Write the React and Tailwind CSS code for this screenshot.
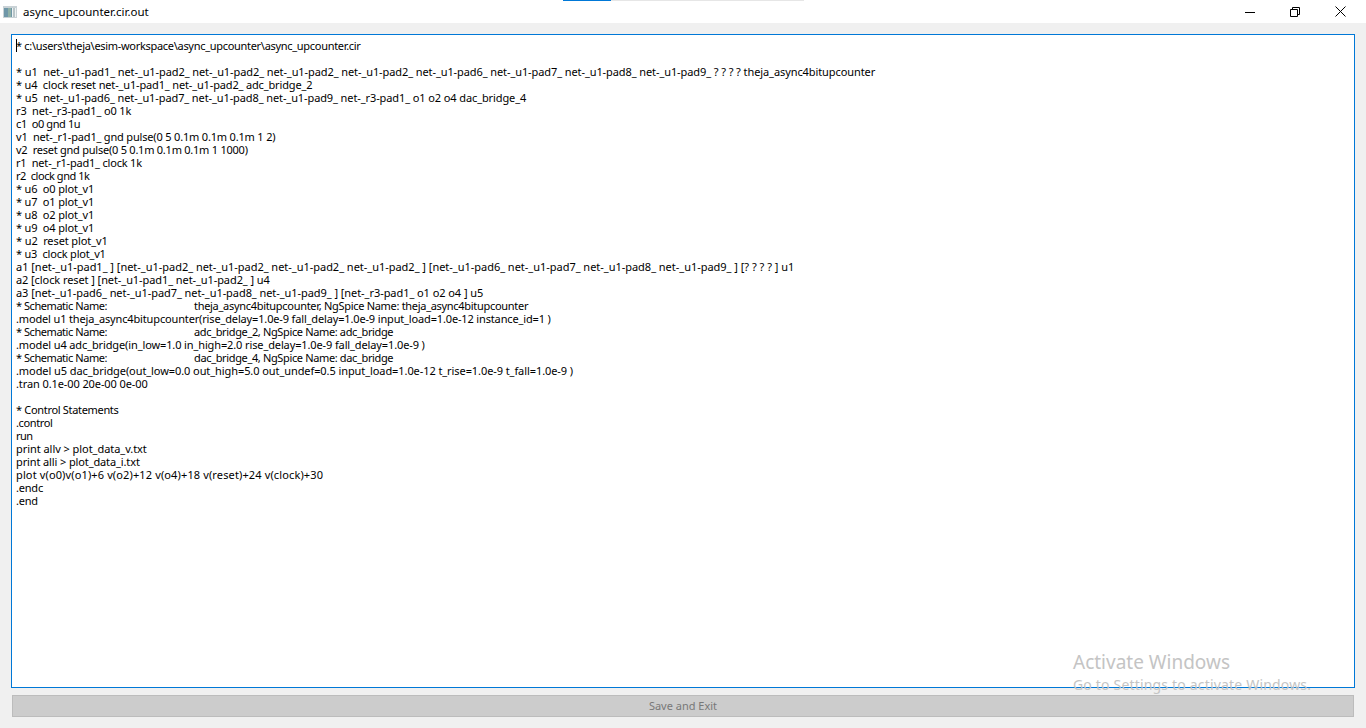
const lines = [
  ["* c:\\users\\theja\\esim-workspace\\async_upcounter\\async_upcounter.cir", "tracking-[-0.3px]"],
  ["", ""],
  ["* u1  net-_u1-pad1_ net-_u1-pad2_ net-_u1-pad2_ net-_u1-pad2_ net-_u1-pad2_ net-_u1-pad6_ net-_u1-pad7_ net-_u1-pad8_ net-_u1-pad9_ ? ? ? ? theja_async4bitupcounter", "tracking-[-0.09px]"],
  ["* u4  clock reset net-_u1-pad1_ net-_u1-pad2_ adc_bridge_2", "tracking-[-0.15px]"],
  ["* u5  net-_u1-pad6_ net-_u1-pad7_ net-_u1-pad8_ net-_u1-pad9_ net-_r3-pad1_ o1 o2 o4 dac_bridge_4", "tracking-[-0.1px]"],
  ["r3  net-_r3-pad1_ o0 1k", "tracking-[-0.12px]"],
  ["c1  o0 gnd 1u", "tracking-[-0.4px]"],
  ["v1  net-_r1-pad1_ gnd pulse(0 5 0.1m 0.1m 0.1m 1 2)", "tracking-[-0.18px]"],
  ["v2  reset gnd pulse(0 5 0.1m 0.1m 0.1m 1 1000)", "tracking-[-0.24px]"],
  ["r1  net-_r1-pad1_ clock 1k", "tracking-[-0.2px]"],
  ["r2  clock gnd 1k", "tracking-[-0.45px]"],
  ["* u6  o0 plot_v1", "tracking-[-0.15px]"],
  ["* u7  o1 plot_v1", "tracking-[-0.15px]"],
  ["* u8  o2 plot_v1", "tracking-[-0.15px]"],
  ["* u9  o4 plot_v1", "tracking-[-0.15px]"],
  ["* u2  reset plot_v1", "tracking-[-0.1px]"],
  ["* u3  clock plot_v1", "tracking-[-0.2px]"],
  ["a1 [net-_u1-pad1_ ] [net-_u1-pad2_ net-_u1-pad2_ net-_u1-pad2_ net-_u1-pad2_ ] [net-_u1-pad6_ net-_u1-pad7_ net-_u1-pad8_ net-_u1-pad9_ ] [? ? ? ? ] u1", "tracking-[-0.02px]"],
  ["a2 [clock reset ] [net-_u1-pad1_ net-_u1-pad2_ ] u4", "tracking-[-0.08px]"],
  ["a3 [net-_u1-pad6_ net-_u1-pad7_ net-_u1-pad8_ net-_u1-pad9_ ] [net-_r3-pad1_ o1 o2 o4 ] u5", "tracking-[-0.06px]"],
  [null, "tracking-[-0.3px]", "theja_async4bitupcounter, NgSpice Name: theja_async4bitupcounter"],
  [".model u1 theja_async4bitupcounter(rise_delay=1.0e-9 fall_delay=1.0e-9 input_load=1.0e-12 instance_id=1 )", "tracking-[-0.15px]"],
  [null, "tracking-[-0.36px]", "adc_bridge_2, NgSpice Name: adc_bridge"],
  [".model u4 adc_bridge(in_low=1.0 in_high=2.0 rise_delay=1.0e-9 fall_delay=1.0e-9 )", "tracking-[-0.12px]"],
  [null, "tracking-[-0.36px]", "dac_bridge_4, NgSpice Name: dac_bridge"],
  [".model u5 dac_bridge(out_low=0.0 out_high=5.0 out_undef=0.5 input_load=1.0e-12 t_rise=1.0e-9 t_fall=1.0e-9 )", "tracking-[-0.08px]"],
  [".tran 0.1e-00 20e-00 0e-00", "tracking-[-0.1px]"],
  ["", ""],
  ["* Control Statements", "tracking-[-0.32px]"],
  [".control", "tracking-[-0.37px]"],
  ["run", "tracking-[-0.5px]"],
  ["print allv > plot_data_v.txt", "tracking-[-0.05px]"],
  ["print alli > plot_data_i.txt", "tracking-[-0.12px]"],
  ["plot v(o0)v(o1)+6 v(o2)+12 v(o4)+18 v(reset)+24 v(clock)+30", "tracking-[0.13px]"],
  [".endc", "tracking-[-0.2px]"],
  [".end", "tracking-[-0.2px]"],
];

export default function App() {
  return (
    <div className="relative flex h-[728px] w-[1366px] flex-col overflow-hidden bg-[#f0f0f0] font-['Noto_Sans',sans-serif] text-black">
      <header className="flex h-[23px] items-center justify-between bg-white pr-[3px] pl-[3px]">
        <div className="flex items-center gap-[6px]">
          <svg width="14" height="14" viewBox="0 0 14 14" className="mt-[1px]">
            <rect x="0" y="1" width="14" height="12" fill="#c9d2d6" />
            <rect x="1" y="3" width="12" height="9" fill="#eef3f3" />
            <rect x="1" y="3" width="8" height="9" fill="#6f97a8" />
            <rect x="5" y="3" width="3" height="9" fill="#8fb0a6" />
            <rect x="10" y="3" width="2" height="9" fill="#b8c4c8" />
          </svg>
          <span className="text-[11.5px] leading-[23px]">async_upcounter.cir.out</span>
        </div>
        <div className="flex h-full items-center">
          <div className="flex w-[45px] justify-center">
            <svg width="10" height="10" viewBox="0 0 10 10"><path d="M0 5.5H10" stroke="#000" /></svg>
          </div>
          <div className="flex w-[45px] justify-center">
            <svg width="10" height="10" viewBox="0 0 10 10" fill="none" stroke="#000"><path d="M0.5 2.5H7.5V9.5H0.5Z" /><path d="M2.5 2.5V0.5H9.5V7.5H7.5" /></svg>
          </div>
          <div className="flex w-[46px] justify-center">
            <svg width="11" height="11" viewBox="0 0 11 11" fill="none" stroke="#000"><path d="M0.5 0.5L10.5 10.5M10.5 0.5L0.5 10.5" /></svg>
          </div>
        </div>
      </header>

      <div className="flex flex-1 flex-col px-[11px] pt-[11px] pb-[12px]">
        <main className="h-[654px] overflow-hidden border border-[#0078d7] bg-white pt-[4px] pl-[4px]">
          <pre className="relative font-['Noto_Sans',sans-serif] text-[11px] leading-[13px] text-black">
            <span className="absolute top-0 left-0 h-[13px] w-px bg-black" />
            {lines.map(([text, spacing, tail], i) =>
              text === null ? (
                <div key={i} className="flex h-[13px] whitespace-pre">
                  <span className="w-[178px] tracking-[-0.45px]">* Schematic Name:</span>
                  <span className={spacing}>{tail}</span>
                </div>
              ) : (
                <div key={i} className={`h-[13px] whitespace-pre ${spacing}`}>{text}</div>
              )
            )}
          </pre>
        </main>
        <button className="mx-[1px] mt-[7px] h-[22px] border border-[#bcbcbc] bg-[#cccccc] pt-[1px] text-[11px] text-[#787878]">
          Save and Exit
        </button>
      </div>

      <div className="absolute top-0 left-[563px] flex h-px w-[241px]">
        <div className="w-[48px] bg-[#0078d7]" />
        <div className="flex-1 bg-[#e6e6e6]" />
      </div>
      <div className="pointer-events-none absolute top-[650px] left-[1073px] text-[#c4c4c4]">
        <div className="text-[19px] leading-[24px]">Activate Windows</div>
        <div className="mt-[1px] text-[14px] leading-[20px] tracking-[0.18px]">Go to Settings to activate Windows.</div>
      </div>
    </div>
  );
}
